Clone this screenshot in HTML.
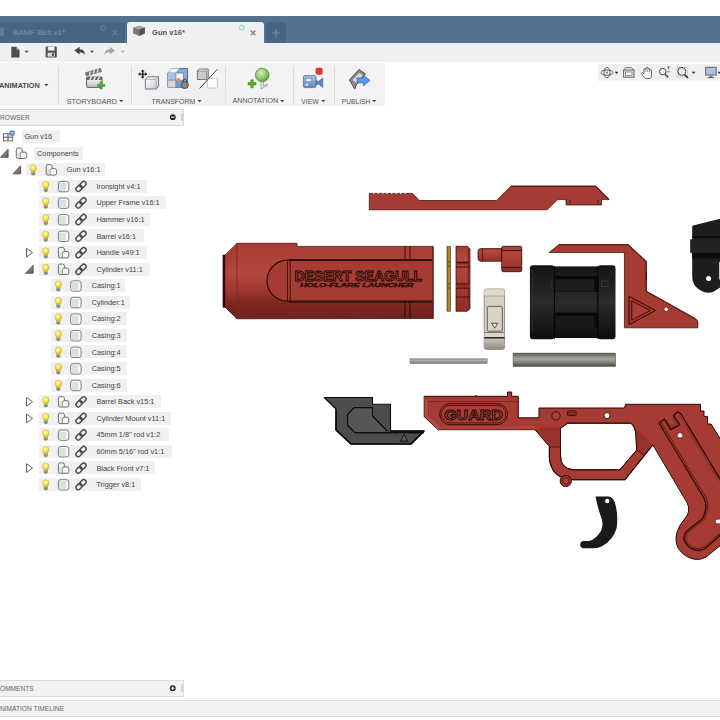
<!DOCTYPE html>
<html><head><meta charset="utf-8"><title>Gun v16</title>
<style>
html,body{margin:0;padding:0;background:#fff;}
body{width:720px;height:720px;position:relative;overflow:hidden;font-family:"Liberation Sans",sans-serif;color:#444;}
.abs{position:absolute;}
#hdr{left:0;top:16px;width:720px;height:27px;background:#53718f;}
#tab1{left:0;top:22px;width:125px;height:21px;background:#486684;border-radius:0 3px 0 0;}
#tab2{left:127px;top:22px;width:137px;height:21px;background:#f0f0f0;border-radius:3px 3px 0 0;}
#tab3{left:266px;top:22px;width:20px;height:21px;background:#486684;border-radius:3px 3px 0 0;}
#qat{left:0;top:43px;width:720px;height:19px;background:#f0f0f0;}
#ribbon{left:0;top:63px;width:385px;height:43px;background:#f3f3f3;}
.sep{position:absolute;top:66px;width:1px;height:38px;background:#dcdcdc;}
.rl{position:absolute;top:96px;font-size:7.3px;color:#555;white-space:nowrap;line-height:9px;}
.tabt{position:absolute;font-size:8px;line-height:10px;white-space:nowrap;}
#nav{left:598px;top:64px;width:122px;height:17px;background:#f0f0f0;}
.bar{position:absolute;background:#f2f2f2;border:1px solid #dcdcdc;box-sizing:border-box;font-size:6.6px;color:#666;white-space:nowrap;}
.row{position:absolute;height:13px;background:#f0f0f0;}
.rt{position:absolute;font-size:7.35px;line-height:13px;color:#444;white-space:nowrap;}
</style></head><body>
<div id="hdr" class="abs"></div>
<div id="tab1" class="abs"></div>
<div id="tab2" class="abs"></div>
<div id="tab3" class="abs"></div>
<div class="tabt" style="left:13px;top:28px;color:#7d93aa;">BAMF Belt v1*</div>
<div class="tabt" style="left:152px;top:28px;color:#555;font-weight:bold;font-size:7.6px;">Gun v16*</div>
<div id="qat" class="abs"></div>
<div id="ribbon" class="abs"></div>
<div id="nav" class="abs"></div>
<div class="sep" style="left:58.3px"></div>
<div class="sep" style="left:131.3px"></div>
<div class="sep" style="left:224.6px"></div>
<div class="sep" style="left:292.6px"></div>
<div class="sep" style="left:333.7px"></div>
<div class="abs" style="left:148px;top:87px;width:77px;height:17px;background:#e9eef3;opacity:.45"></div>
<div class="abs" style="left:224px;top:87px;width:44px;height:17px;background:#edf1f5;opacity:.35"></div>
<div class="rl" style="left:-1px;top:81.3px;font-weight:bold;color:#4a4a4a;">ANIMATION</div>
<div class="rl" style="left:66.8px;top:96.5px;font-size:7.2px">STORYBOARD</div>
<div class="rl" style="left:151.5px;top:96.5px;font-size:6.9px">TRANSFORM</div>
<div class="rl" style="left:232.6px;top:96.5px;font-size:7.1px">ANNOTATION</div>
<div class="rl" style="left:301.3px;top:96.5px;font-size:6.8px">VIEW</div>
<div class="rl" style="left:341.8px;top:96.5px;font-size:6.65px">PUBLISH</div>
<svg class="abs" style="left:0;top:0" width="720" height="130" viewBox="0 0 720 130">
<defs>
<linearGradient id="gcube" x1="0" y1="0" x2="1" y2="1"><stop offset="0" stop-color="#fff"/><stop offset="1" stop-color="#c9ccd2"/></linearGradient>
<radialGradient id="ggreen" cx=".4" cy=".35" r=".7"><stop offset="0" stop-color="#d9f0c0"/><stop offset=".6" stop-color="#8cc460"/><stop offset="1" stop-color="#5b9a36"/></radialGradient>
<linearGradient id="gblue" x1="0" y1="0" x2="0" y2="1"><stop offset="0" stop-color="#a9c4ec"/><stop offset="1" stop-color="#5f86c9"/></linearGradient>
<linearGradient id="gclap" x1="0" y1="0" x2="0" y2="1"><stop offset="0" stop-color="#fdfdfd"/><stop offset="1" stop-color="#b9bfc8"/></linearGradient>
</defs>
<path d="M119.20,99.90 h4.20 l-2.10,2.40z" fill="#444"/>
<path d="M197.50,99.90 h4.20 l-2.10,2.40z" fill="#444"/>
<path d="M280.20,99.90 h4.20 l-2.10,2.40z" fill="#444"/>
<path d="M321.20,99.90 h4.20 l-2.10,2.40z" fill="#444"/>
<path d="M372.20,99.90 h4.20 l-2.10,2.40z" fill="#444"/>
<path d="M44.30,83.90 h4.20 l-2.10,2.40z" fill="#444"/>
<path d="M0,28 l4,-1.5 v9 l-4,1.5z" fill="#5d7a97"/>
<circle cx="103.3" cy="27.6" r="2.4" fill="none" stroke="#3f9aa0" stroke-width="1"/>
<path d="M112.6,30.3 l4.8,4.8 m0,-4.8 l-4.8,4.8" stroke="#5f7c98" stroke-width="1.3" fill="none"/>
<circle cx="241.8" cy="27.6" r="2.4" fill="none" stroke="#7fd0c0" stroke-width="1"/>
<path d="M250.8,30.6 l4.6,4.6 m0,-4.6 l-4.6,4.6" stroke="#8a8a8a" stroke-width="1.5" fill="none"/>
<path d="M272,33 h8 m-4,-4 v8" stroke="#6f8ba6" stroke-width="1.2" fill="none"/>
<path d="M133.2,27.6 l6,-1.6 l5.6,1.4 v6 l-5.4,2.6 l-6.2,-2.4z" fill="#777"/><path d="M133.2,27.6 l6.2,1.8 l5.4,-2 l-5.6,-1.4z" fill="#a5a5a5"/><path d="M139.4,29.4 l5.4,-2 v6 l-5.4,2.6z" fill="#555"/>
<path d="M11.3,46.8 h5 l3.2,3.2 v7.4 h-8.2z" fill="#4d4d4d"/><path d="M16.3,46.8 v3.2 h3.2z" fill="#9a9a9a"/>
<path d="M24.71,50.81 h3.78 l-1.89,2.16z" fill="#444"/>
<rect x="45.6" y="46.6" width="11.2" height="10.8" rx="1.2" fill="#4d4d4d"/><rect x="47.8" y="46.6" width="6.8" height="4" fill="#f0f0f0"/><rect x="47.6" y="52.6" width="7.2" height="4" fill="#d8d8d8"/><rect x="52" y="53.2" width="1.8" height="2.8" fill="#4d4d4d"/>
<path d="M74.4,50.6 l5.2,-3.8 v2.4 q5.4,0 5.4,5.6 q-1.6,-2.8 -5.4,-2.6 v2.4z" fill="#454545"/>
<path d="M90.11,50.81 h3.78 l-1.89,2.16z" fill="#444"/>
<path d="M115,50.6 l-5.2,-3.8 v2.4 q-5.4,0 -5.4,5.6 q1.6,-2.8 5.4,-2.6 v2.4z" fill="#a8a8a8"/>
<path d="M120.91,50.81 h3.78 l-1.89,2.16z" fill="#aaa"/>
<g><rect x="86.6" y="77" width="15.4" height="10.4" rx=".8" fill="url(#gclap)" stroke="#555" stroke-width=".9"/><rect x="86.6" y="77" width="15.4" height="3" fill="#666"/><path d="M89,80 l1.6,-3 h1.6 l-1.6,3z M93,80 l1.6,-3 h1.6 l-1.6,3z M97,80 l1.6,-3 h1.6 l-1.6,3z" fill="#eee"/><g transform="rotate(-16 86.6 76)"><rect x="86.4" y="72.6" width="15.6" height="3.2" fill="#777" stroke="#555" stroke-width=".6"/><path d="M89,75.8 l1.6,-3.2 h1.6 l-1.6,3.2z M93,75.8 l1.6,-3.2 h1.6 l-1.6,3.2z M97,75.8 l1.6,-3.2 h1.6 l-1.6,3.2z" fill="#eee"/></g><path d="M97.6,84.4 h2.6 v-2.6 h2 v2.6 h2.6 v2 h-2.6 v2.6 h-2 v-2.6 h-2.6z" fill="#56b02c" stroke="#2f7a12" stroke-width=".5"/></g>
<g><path d="M142.7,69.4 l1.9,2.2 h-1.2 v1.8 h1.8 v-1.2 l2.2,1.9 l-2.2,1.9 v-1.2 h-1.8 v1.8 h1.2 l-1.9,2.2 l-1.9,-2.2 h1.2 v-1.8 h-1.8 v1.2 l-2.2,-1.9 l2.2,-1.9 v1.2 h1.8 v-1.8 h-1.2z" fill="#222"/><path d="M145.4,79.4 l2.4,-2.6 h10.8 v9.6 l-2.4,2.6 h-10.8z" fill="url(#gcube)" stroke="#666" stroke-width=".9" stroke-linejoin="round"/><path d="M145.4,79.4 h10.8 v9.6 m0,-9.6 l2.4,-2.6" fill="none" stroke="#888" stroke-width=".6"/></g>
<g><path d="M168,73 l4,-4.4 h15.6 v14.4 l-4,4.4 h-15.6z" fill="#86addf" stroke="#4a5f80" stroke-width=".9" stroke-linejoin="round"/><path d="M168,73 l4,-4.4 h7.8 l-4,4.4z" fill="#f1f4f8"/><rect x="168" y="73" width="15.6" height="14.4" fill="#f2f3f5" stroke="#4a5f80" stroke-width=".6"/><rect x="168" y="73" width="7.8" height="7.2" fill="#a9c3e8"/><rect x="168" y="80.2" width="7.8" height="7.2" fill="#d3d7dd"/><rect x="175.8" y="80.2" width="7.8" height="7.2" fill="#6f9bd8"/><path d="M168,80.2 h15.6 M175.8,73 v14.4 M179.8,68.6 l-4,4.4 M183.6,80.2 l4,-4.4" stroke="#5a6f90" stroke-width=".6" fill="none"/><circle cx="178.4" cy="79.8" r="1.9" fill="#f08a24"/><circle cx="184.8" cy="85" r="3.6" fill="#868686" stroke="#4a4a4a" stroke-width=".9"/><path d="M183,82.6 v-1.6 a1.8,1.8 0 0 1 3.6,0 v1.6" fill="none" stroke="#4a4a4a" stroke-width="1"/></g>
<g><path d="M197.4,71 l1.8,-2 h9 v8.4 l-1.8,2 h-9z" fill="url(#gcube)" stroke="#666" stroke-width=".9" stroke-linejoin="round"/><rect x="197.4" y="71" width="9" height="8.4" fill="#c6cad2" stroke="#666" stroke-width=".6"/><rect x="207.4" y="78.4" width="10" height="9.6" rx="1" fill="#fbfbfb" stroke="#999" stroke-width=".8" stroke-dasharray="1.6 1"/><path d="M199.6,88.4 L217.4,69.2" stroke="#444" stroke-width="1"/></g>
<g><path d="M261,80 h2.4 v6 l4,-2 v1.4 l-6.4,3.4z" fill="#eee" stroke="#777" stroke-width=".6"/><circle cx="262.2" cy="75" r="6.8" fill="url(#ggreen)" stroke="#4d8a2a" stroke-width=".8"/><path d="M248,82.6 h2.8 v-2.8 h2.4 v2.8 h2.8 v2.4 h-2.8 v2.8 h-2.4 v-2.8 h-2.8z" fill="#56b02c" stroke="#2f7a12" stroke-width=".5"/></g>
<g><rect x="303.4" y="75.6" width="12.6" height="12" rx="1.4" fill="url(#gblue)" stroke="#5a6f9a" stroke-width=".8"/><path d="M316,80.4 l2.4,1 l4.4,-3.4 v9.4 l-4.4,-3.4 l-2.4,1z" fill="#5f86c9" stroke="#4a5f90" stroke-width=".6"/><rect x="305.4" y="78.4" width="6.4" height="3.4" fill="#dfe8f6" stroke="#5a6f9a" stroke-width=".5"/><rect x="305.4" y="84" width="3" height="1.6" fill="#dfe8f6"/><rect x="315.6" y="67.8" width="7" height="7" rx="1.8" fill="#d93636"/></g>
<g><path d="M349.4,80 l9.6,-10.6 l6.4,4.4 l-9.2,11.2 l-1.4,4z" fill="#888" stroke="#444" stroke-width=".9" stroke-linejoin="round"/><path d="M352.6,80 l6.6,-7.2 l3.6,2.6 l-6.6,7.6z" fill="#d8d8d8"/><path d="M357,78 h6.4 v-3 l6.6,5.4 l-6.6,5.4 v-3 h-6.4z" fill="#5b98ea" stroke="#2c62b4" stroke-width=".7" stroke-linejoin="round"/></g>
<g fill="none" stroke="#555" stroke-width=".9"><ellipse cx="607" cy="72.6" rx="3" ry="5.2"/><ellipse cx="607" cy="72.6" rx="6" ry="2.6"/></g><circle cx="607" cy="72.6" r="1" fill="#3b7bd6"/>
<path d="M614.71,71.81 h3.78 l-1.89,2.16z" fill="#333"/>
<rect x="623.6" y="70" width="10.4" height="7.2" fill="#dde3ec" stroke="#555" stroke-width=".9"/><rect x="625.6" y="72" width="6.4" height="3.2" fill="#fff" stroke="#555" stroke-width=".6"/><path d="M624,70 l1.6,-2.4 h6 l2,2.4" fill="none" stroke="#555" stroke-width=".8"/>
<path d="M645.4,78.4 q-3,-2.8 -4,-5.4 q1.2,-1 2.6,.8 v-4.8 q1,-1 1.9,0 v-1.2 q1,-1 1.9,0 v1 q1,-.9 1.9,0 v1.2 q1,-.7 1.8,.2 v5.2 q0,2 -1.2,3z" fill="#fff" stroke="#444" stroke-width=".8" stroke-linejoin="round"/><path d="M645.9,69 v3 M647.8,68.8 v3.2 M649.7,69.6 v2.6" stroke="#444" stroke-width=".6"/>
<circle cx="662.8" cy="71.6" r="3.3" fill="#eef3f8" stroke="#444" stroke-width="1"/><path d="M665.2,74.2 l3,3.2" stroke="#444" stroke-width="1.6"/><path d="M668.6,66.4 v3.2 m-1.2,-2 l1.2,-1.4 l1.2,1.4 M667.2,71.8 h2.8" stroke="#444" stroke-width=".7" fill="none"/>
<rect x="677" y="67.4" width="10.6" height="9.6" fill="none" stroke="#888" stroke-width=".6" stroke-dasharray="1.2 1"/><circle cx="681.8" cy="71.4" r="4" fill="#e3eef4" stroke="#444" stroke-width="1"/><path d="M684.6,74.6 l3.4,3.4" stroke="#333" stroke-width="1.7"/>
<path d="M691.71,71.81 h3.78 l-1.89,2.16z" fill="#333"/>
<rect x="705.6" y="67.4" width="10.6" height="7.6" fill="#a9c2e6" stroke="#777" stroke-width="1.2"/><rect x="709.4" y="75.6" width="3" height="1.6" fill="#777"/><rect x="707.6" y="77" width="6.6" height="1.1" fill="#666"/>
<path d="M717.51,71.81 h3.78 l-1.89,2.16z" fill="#333"/>
</svg>
<div class="bar" style="left:-1px;top:108.5px;width:184.5px;height:17px;line-height:15.5px;">ROWSER</div>
<div class="row" style="left:21.7px;top:130.00px;width:38.3px"></div>
<div class="rt" style="left:24.4px;top:130.20px">Gun v16</div>
<div class="row" style="left:34px;top:146.57px;width:49.0px"></div>
<div class="rt" style="left:37px;top:146.77px">Components</div>
<div class="row" style="left:26.2px;top:163.14px;width:78.8px"></div>
<div class="rt" style="left:66.7px;top:163.34px">Gun v16:1</div>
<div class="row" style="left:39px;top:179.71px;width:108.0px"></div>
<div class="rt" style="left:96.4px;top:179.91px">Ironsight v4:1</div>
<div class="row" style="left:39px;top:196.28px;width:127.0px"></div>
<div class="rt" style="left:96.4px;top:196.48px">Upper Frame v16:1</div>
<div class="row" style="left:39px;top:212.85px;width:110.5px"></div>
<div class="rt" style="left:96.4px;top:213.05px">Hammer v16:1</div>
<div class="row" style="left:39px;top:229.42px;width:105.0px"></div>
<div class="rt" style="left:96.4px;top:229.62px">Barrel v16:1</div>
<div class="row" style="left:39px;top:245.99px;width:108.0px"></div>
<div class="rt" style="left:96.4px;top:246.19px">Handle v49:1</div>
<div class="row" style="left:39px;top:262.56px;width:110.5px"></div>
<div class="rt" style="left:96.4px;top:262.76px">Cylinder v11:1</div>
<div class="row" style="left:51.4px;top:279.13px;width:73.6px"></div>
<div class="rt" style="left:91.7px;top:279.33px">Casing:1</div>
<div class="row" style="left:51.4px;top:295.70px;width:78.6px"></div>
<div class="rt" style="left:91.7px;top:295.90px">Cylinder:1</div>
<div class="row" style="left:51.4px;top:312.27px;width:76.1px"></div>
<div class="rt" style="left:91.7px;top:312.47px">Casing:2</div>
<div class="row" style="left:51.4px;top:328.84px;width:76.1px"></div>
<div class="rt" style="left:91.7px;top:329.04px">Casing:3</div>
<div class="row" style="left:51.4px;top:345.41px;width:76.1px"></div>
<div class="rt" style="left:91.7px;top:345.61px">Casing:4</div>
<div class="row" style="left:51.4px;top:361.98px;width:76.1px"></div>
<div class="rt" style="left:91.7px;top:362.18px">Casing:5</div>
<div class="row" style="left:51.4px;top:378.55px;width:76.1px"></div>
<div class="rt" style="left:91.7px;top:378.75px">Casing:6</div>
<div class="row" style="left:39px;top:395.12px;width:122.0px"></div>
<div class="rt" style="left:96.4px;top:395.32px">Barrel Back v15:1</div>
<div class="row" style="left:39px;top:411.69px;width:132.0px"></div>
<div class="rt" style="left:96.4px;top:411.89px">Cylinder Mount v11:1</div>
<div class="row" style="left:39px;top:428.26px;width:129.5px"></div>
<div class="rt" style="left:96.4px;top:428.46px">45mm 1/8&quot; rod v1:2</div>
<div class="row" style="left:39px;top:444.83px;width:132.5px"></div>
<div class="rt" style="left:96.4px;top:445.03px">60mm 5/16&quot; rod v1:1</div>
<div class="row" style="left:39px;top:461.40px;width:116.0px"></div>
<div class="rt" style="left:96.4px;top:461.60px">Black Front v7:1</div>
<div class="row" style="left:39px;top:477.97px;width:102.0px"></div>
<div class="rt" style="left:96.4px;top:478.17px">Trigger v8:1</div>
<svg class="abs" style="left:0;top:0" width="200" height="500" viewBox="0 0 200 500"><defs><radialGradient id="gb" cx=".4" cy=".35" r=".7"><stop offset="0" stop-color="#fffbd0"/><stop offset=".5" stop-color="#f9e85a"/><stop offset="1" stop-color="#e9c320"/></radialGradient><linearGradient id="gt" x1="0" y1="0" x2="1" y2="1"><stop offset="0" stop-color="#bbb"/><stop offset="1" stop-color="#555"/></linearGradient></defs><g transform="translate(8.50,136.70)" fill="#f4f4f4" stroke="#666" stroke-width=".9"><rect x="-5" y="-3" width="4.6" height="3.6"/><rect x="-.4" y="-3" width="4.6" height="3.6"/><rect x="-5" y=".6" width="4.6" height="3.6"/><rect x="-.4" y=".6" width="4.6" height="3.6"/><rect x="1.6" y="-5.6" width="4" height="4" fill="#8fb4e6" stroke="#3b6fb5"/></g>
<path d="M8.10,149.27 v8 h-7.6z" fill="url(#gt)" stroke="#444" stroke-width=".8" stroke-linejoin="round"/>
<g transform="translate(21.30,153.27)"><path d="M-5,-3.4 q0,-1.8 1.8,-1.8 h2.4 q1.8,0 1.8,1.8 v2.2 h2.6 q1.8,0 1.8,1.8 v2.8 q0,1.8 -1.8,1.8 h-6.8 q-1.8,0 -1.8,-1.8z" fill="#f6f6f6" stroke="#6e6e6e" stroke-width="1"/><path d="M-1.2,5 v-4.4 q0,-1.6 2.2,-1.8" fill="none" stroke="#6e6e6e" stroke-width=".9"/><rect x="-4.2" y="-0.8" width="2.6" height="5" fill="#dedfe3"/></g>
<path d="M20.60,165.84 v8 h-7.6z" fill="url(#gt)" stroke="#444" stroke-width=".8" stroke-linejoin="round"/>
<g transform="translate(33.30,169.84)"><path d="M-1.6,2.2 h3.2 v2.6 q-1.6,1 -3.2,0z" fill="#8a8f9a" stroke="#666" stroke-width=".4"/><circle cx="0" cy="-1.7" r="3.25" fill="url(#gb)" stroke="#c4a52a" stroke-width=".5"/><path d="M-1.9,1.3 q1.9,1.2 3.8,0 l-.4,1.4 h-3z" fill="#f3d93a" stroke="#b89b1e" stroke-width=".4"/></g>
<g transform="translate(51.20,169.84)"><path d="M-5,-3.4 q0,-1.8 1.8,-1.8 h2.4 q1.8,0 1.8,1.8 v2.2 h2.6 q1.8,0 1.8,1.8 v2.8 q0,1.8 -1.8,1.8 h-6.8 q-1.8,0 -1.8,-1.8z" fill="#f6f6f6" stroke="#6e6e6e" stroke-width="1"/><path d="M-1.2,5 v-4.4 q0,-1.6 2.2,-1.8" fill="none" stroke="#6e6e6e" stroke-width=".9"/><rect x="-4.2" y="-0.8" width="2.6" height="5" fill="#dedfe3"/></g>
<g transform="translate(45.80,186.41)"><path d="M-1.6,2.2 h3.2 v2.6 q-1.6,1 -3.2,0z" fill="#8a8f9a" stroke="#666" stroke-width=".4"/><circle cx="0" cy="-1.7" r="3.25" fill="url(#gb)" stroke="#c4a52a" stroke-width=".5"/><path d="M-1.9,1.3 q1.9,1.2 3.8,0 l-.4,1.4 h-3z" fill="#f3d93a" stroke="#b89b1e" stroke-width=".4"/></g>
<g transform="translate(63.40,186.41)"><rect x="-5" y="-5" width="10.4" height="10.4" rx="2.4" fill="#fafafa" stroke="#787878" stroke-width=".95"/><rect x="-4.2" y="-2.8" width="7" height="7.4" rx="1.2" fill="#dedfe3"/><path d="M-4.2,-2.8 h7 l1.8,-1.6" fill="none" stroke="#c4c4c8" stroke-width=".5"/></g>
<g transform="translate(81.00,186.41) rotate(-45)" fill="none" stroke="#484848" stroke-width="1.4"><rect x="-6.2" y="-2.3" width="6.9" height="4.6" rx="2.3"/><rect x="-0.7" y="-2.3" width="6.9" height="4.6" rx="2.3"/></g>
<g transform="translate(45.80,202.98)"><path d="M-1.6,2.2 h3.2 v2.6 q-1.6,1 -3.2,0z" fill="#8a8f9a" stroke="#666" stroke-width=".4"/><circle cx="0" cy="-1.7" r="3.25" fill="url(#gb)" stroke="#c4a52a" stroke-width=".5"/><path d="M-1.9,1.3 q1.9,1.2 3.8,0 l-.4,1.4 h-3z" fill="#f3d93a" stroke="#b89b1e" stroke-width=".4"/></g>
<g transform="translate(63.40,202.98)"><rect x="-5" y="-5" width="10.4" height="10.4" rx="2.4" fill="#fafafa" stroke="#787878" stroke-width=".95"/><rect x="-4.2" y="-2.8" width="7" height="7.4" rx="1.2" fill="#dedfe3"/><path d="M-4.2,-2.8 h7 l1.8,-1.6" fill="none" stroke="#c4c4c8" stroke-width=".5"/></g>
<g transform="translate(81.00,202.98) rotate(-45)" fill="none" stroke="#484848" stroke-width="1.4"><rect x="-6.2" y="-2.3" width="6.9" height="4.6" rx="2.3"/><rect x="-0.7" y="-2.3" width="6.9" height="4.6" rx="2.3"/></g>
<g transform="translate(45.80,219.55)"><path d="M-1.6,2.2 h3.2 v2.6 q-1.6,1 -3.2,0z" fill="#8a8f9a" stroke="#666" stroke-width=".4"/><circle cx="0" cy="-1.7" r="3.25" fill="url(#gb)" stroke="#c4a52a" stroke-width=".5"/><path d="M-1.9,1.3 q1.9,1.2 3.8,0 l-.4,1.4 h-3z" fill="#f3d93a" stroke="#b89b1e" stroke-width=".4"/></g>
<g transform="translate(63.40,219.55)"><rect x="-5" y="-5" width="10.4" height="10.4" rx="2.4" fill="#fafafa" stroke="#787878" stroke-width=".95"/><rect x="-4.2" y="-2.8" width="7" height="7.4" rx="1.2" fill="#dedfe3"/><path d="M-4.2,-2.8 h7 l1.8,-1.6" fill="none" stroke="#c4c4c8" stroke-width=".5"/></g>
<g transform="translate(81.00,219.55) rotate(-45)" fill="none" stroke="#484848" stroke-width="1.4"><rect x="-6.2" y="-2.3" width="6.9" height="4.6" rx="2.3"/><rect x="-0.7" y="-2.3" width="6.9" height="4.6" rx="2.3"/></g>
<g transform="translate(45.80,236.12)"><path d="M-1.6,2.2 h3.2 v2.6 q-1.6,1 -3.2,0z" fill="#8a8f9a" stroke="#666" stroke-width=".4"/><circle cx="0" cy="-1.7" r="3.25" fill="url(#gb)" stroke="#c4a52a" stroke-width=".5"/><path d="M-1.9,1.3 q1.9,1.2 3.8,0 l-.4,1.4 h-3z" fill="#f3d93a" stroke="#b89b1e" stroke-width=".4"/></g>
<g transform="translate(63.40,236.12)"><rect x="-5" y="-5" width="10.4" height="10.4" rx="2.4" fill="#fafafa" stroke="#787878" stroke-width=".95"/><rect x="-4.2" y="-2.8" width="7" height="7.4" rx="1.2" fill="#dedfe3"/><path d="M-4.2,-2.8 h7 l1.8,-1.6" fill="none" stroke="#c4c4c8" stroke-width=".5"/></g>
<g transform="translate(81.00,236.12) rotate(-45)" fill="none" stroke="#484848" stroke-width="1.4"><rect x="-6.2" y="-2.3" width="6.9" height="4.6" rx="2.3"/><rect x="-0.7" y="-2.3" width="6.9" height="4.6" rx="2.3"/></g>
<path d="M26.50,248.29 v8.8 l6,-4.4z" fill="#fff" stroke="#666" stroke-width="1" stroke-linejoin="round"/>
<g transform="translate(45.80,252.69)"><path d="M-1.6,2.2 h3.2 v2.6 q-1.6,1 -3.2,0z" fill="#8a8f9a" stroke="#666" stroke-width=".4"/><circle cx="0" cy="-1.7" r="3.25" fill="url(#gb)" stroke="#c4a52a" stroke-width=".5"/><path d="M-1.9,1.3 q1.9,1.2 3.8,0 l-.4,1.4 h-3z" fill="#f3d93a" stroke="#b89b1e" stroke-width=".4"/></g>
<g transform="translate(63.40,252.69)"><path d="M-5,-3.4 q0,-1.8 1.8,-1.8 h2.4 q1.8,0 1.8,1.8 v2.2 h2.6 q1.8,0 1.8,1.8 v2.8 q0,1.8 -1.8,1.8 h-6.8 q-1.8,0 -1.8,-1.8z" fill="#f6f6f6" stroke="#6e6e6e" stroke-width="1"/><path d="M-1.2,5 v-4.4 q0,-1.6 2.2,-1.8" fill="none" stroke="#6e6e6e" stroke-width=".9"/><rect x="-4.2" y="-0.8" width="2.6" height="5" fill="#dedfe3"/></g>
<g transform="translate(81.00,252.69) rotate(-45)" fill="none" stroke="#484848" stroke-width="1.4"><rect x="-6.2" y="-2.3" width="6.9" height="4.6" rx="2.3"/><rect x="-0.7" y="-2.3" width="6.9" height="4.6" rx="2.3"/></g>
<path d="M33.10,265.26 v8 h-7.6z" fill="url(#gt)" stroke="#444" stroke-width=".8" stroke-linejoin="round"/>
<g transform="translate(45.80,269.26)"><path d="M-1.6,2.2 h3.2 v2.6 q-1.6,1 -3.2,0z" fill="#8a8f9a" stroke="#666" stroke-width=".4"/><circle cx="0" cy="-1.7" r="3.25" fill="url(#gb)" stroke="#c4a52a" stroke-width=".5"/><path d="M-1.9,1.3 q1.9,1.2 3.8,0 l-.4,1.4 h-3z" fill="#f3d93a" stroke="#b89b1e" stroke-width=".4"/></g>
<g transform="translate(63.40,269.26)"><path d="M-5,-3.4 q0,-1.8 1.8,-1.8 h2.4 q1.8,0 1.8,1.8 v2.2 h2.6 q1.8,0 1.8,1.8 v2.8 q0,1.8 -1.8,1.8 h-6.8 q-1.8,0 -1.8,-1.8z" fill="#f6f6f6" stroke="#6e6e6e" stroke-width="1"/><path d="M-1.2,5 v-4.4 q0,-1.6 2.2,-1.8" fill="none" stroke="#6e6e6e" stroke-width=".9"/><rect x="-4.2" y="-0.8" width="2.6" height="5" fill="#dedfe3"/></g>
<g transform="translate(81.00,269.26) rotate(-45)" fill="none" stroke="#484848" stroke-width="1.4"><rect x="-6.2" y="-2.3" width="6.9" height="4.6" rx="2.3"/><rect x="-0.7" y="-2.3" width="6.9" height="4.6" rx="2.3"/></g>
<g transform="translate(58.30,285.83)"><path d="M-1.6,2.2 h3.2 v2.6 q-1.6,1 -3.2,0z" fill="#8a8f9a" stroke="#666" stroke-width=".4"/><circle cx="0" cy="-1.7" r="3.25" fill="url(#gb)" stroke="#c4a52a" stroke-width=".5"/><path d="M-1.9,1.3 q1.9,1.2 3.8,0 l-.4,1.4 h-3z" fill="#f3d93a" stroke="#b89b1e" stroke-width=".4"/></g>
<g transform="translate(75.70,285.83)"><rect x="-5" y="-5" width="10.4" height="10.4" rx="2.4" fill="#fafafa" stroke="#787878" stroke-width=".95"/><rect x="-4.2" y="-2.8" width="7" height="7.4" rx="1.2" fill="#dedfe3"/><path d="M-4.2,-2.8 h7 l1.8,-1.6" fill="none" stroke="#c4c4c8" stroke-width=".5"/></g>
<g transform="translate(58.30,302.40)"><path d="M-1.6,2.2 h3.2 v2.6 q-1.6,1 -3.2,0z" fill="#8a8f9a" stroke="#666" stroke-width=".4"/><circle cx="0" cy="-1.7" r="3.25" fill="url(#gb)" stroke="#c4a52a" stroke-width=".5"/><path d="M-1.9,1.3 q1.9,1.2 3.8,0 l-.4,1.4 h-3z" fill="#f3d93a" stroke="#b89b1e" stroke-width=".4"/></g>
<g transform="translate(75.70,302.40)"><rect x="-5" y="-5" width="10.4" height="10.4" rx="2.4" fill="#fafafa" stroke="#787878" stroke-width=".95"/><rect x="-4.2" y="-2.8" width="7" height="7.4" rx="1.2" fill="#dedfe3"/><path d="M-4.2,-2.8 h7 l1.8,-1.6" fill="none" stroke="#c4c4c8" stroke-width=".5"/></g>
<g transform="translate(58.30,318.97)"><path d="M-1.6,2.2 h3.2 v2.6 q-1.6,1 -3.2,0z" fill="#8a8f9a" stroke="#666" stroke-width=".4"/><circle cx="0" cy="-1.7" r="3.25" fill="url(#gb)" stroke="#c4a52a" stroke-width=".5"/><path d="M-1.9,1.3 q1.9,1.2 3.8,0 l-.4,1.4 h-3z" fill="#f3d93a" stroke="#b89b1e" stroke-width=".4"/></g>
<g transform="translate(75.70,318.97)"><rect x="-5" y="-5" width="10.4" height="10.4" rx="2.4" fill="#fafafa" stroke="#787878" stroke-width=".95"/><rect x="-4.2" y="-2.8" width="7" height="7.4" rx="1.2" fill="#dedfe3"/><path d="M-4.2,-2.8 h7 l1.8,-1.6" fill="none" stroke="#c4c4c8" stroke-width=".5"/></g>
<g transform="translate(58.30,335.54)"><path d="M-1.6,2.2 h3.2 v2.6 q-1.6,1 -3.2,0z" fill="#8a8f9a" stroke="#666" stroke-width=".4"/><circle cx="0" cy="-1.7" r="3.25" fill="url(#gb)" stroke="#c4a52a" stroke-width=".5"/><path d="M-1.9,1.3 q1.9,1.2 3.8,0 l-.4,1.4 h-3z" fill="#f3d93a" stroke="#b89b1e" stroke-width=".4"/></g>
<g transform="translate(75.70,335.54)"><rect x="-5" y="-5" width="10.4" height="10.4" rx="2.4" fill="#fafafa" stroke="#787878" stroke-width=".95"/><rect x="-4.2" y="-2.8" width="7" height="7.4" rx="1.2" fill="#dedfe3"/><path d="M-4.2,-2.8 h7 l1.8,-1.6" fill="none" stroke="#c4c4c8" stroke-width=".5"/></g>
<g transform="translate(58.30,352.11)"><path d="M-1.6,2.2 h3.2 v2.6 q-1.6,1 -3.2,0z" fill="#8a8f9a" stroke="#666" stroke-width=".4"/><circle cx="0" cy="-1.7" r="3.25" fill="url(#gb)" stroke="#c4a52a" stroke-width=".5"/><path d="M-1.9,1.3 q1.9,1.2 3.8,0 l-.4,1.4 h-3z" fill="#f3d93a" stroke="#b89b1e" stroke-width=".4"/></g>
<g transform="translate(75.70,352.11)"><rect x="-5" y="-5" width="10.4" height="10.4" rx="2.4" fill="#fafafa" stroke="#787878" stroke-width=".95"/><rect x="-4.2" y="-2.8" width="7" height="7.4" rx="1.2" fill="#dedfe3"/><path d="M-4.2,-2.8 h7 l1.8,-1.6" fill="none" stroke="#c4c4c8" stroke-width=".5"/></g>
<g transform="translate(58.30,368.68)"><path d="M-1.6,2.2 h3.2 v2.6 q-1.6,1 -3.2,0z" fill="#8a8f9a" stroke="#666" stroke-width=".4"/><circle cx="0" cy="-1.7" r="3.25" fill="url(#gb)" stroke="#c4a52a" stroke-width=".5"/><path d="M-1.9,1.3 q1.9,1.2 3.8,0 l-.4,1.4 h-3z" fill="#f3d93a" stroke="#b89b1e" stroke-width=".4"/></g>
<g transform="translate(75.70,368.68)"><rect x="-5" y="-5" width="10.4" height="10.4" rx="2.4" fill="#fafafa" stroke="#787878" stroke-width=".95"/><rect x="-4.2" y="-2.8" width="7" height="7.4" rx="1.2" fill="#dedfe3"/><path d="M-4.2,-2.8 h7 l1.8,-1.6" fill="none" stroke="#c4c4c8" stroke-width=".5"/></g>
<g transform="translate(58.30,385.25)"><path d="M-1.6,2.2 h3.2 v2.6 q-1.6,1 -3.2,0z" fill="#8a8f9a" stroke="#666" stroke-width=".4"/><circle cx="0" cy="-1.7" r="3.25" fill="url(#gb)" stroke="#c4a52a" stroke-width=".5"/><path d="M-1.9,1.3 q1.9,1.2 3.8,0 l-.4,1.4 h-3z" fill="#f3d93a" stroke="#b89b1e" stroke-width=".4"/></g>
<g transform="translate(75.70,385.25)"><rect x="-5" y="-5" width="10.4" height="10.4" rx="2.4" fill="#fafafa" stroke="#787878" stroke-width=".95"/><rect x="-4.2" y="-2.8" width="7" height="7.4" rx="1.2" fill="#dedfe3"/><path d="M-4.2,-2.8 h7 l1.8,-1.6" fill="none" stroke="#c4c4c8" stroke-width=".5"/></g>
<path d="M26.50,397.42 v8.8 l6,-4.4z" fill="#fff" stroke="#666" stroke-width="1" stroke-linejoin="round"/>
<g transform="translate(45.80,401.82)"><path d="M-1.6,2.2 h3.2 v2.6 q-1.6,1 -3.2,0z" fill="#8a8f9a" stroke="#666" stroke-width=".4"/><circle cx="0" cy="-1.7" r="3.25" fill="url(#gb)" stroke="#c4a52a" stroke-width=".5"/><path d="M-1.9,1.3 q1.9,1.2 3.8,0 l-.4,1.4 h-3z" fill="#f3d93a" stroke="#b89b1e" stroke-width=".4"/></g>
<g transform="translate(63.40,401.82)"><path d="M-5,-3.4 q0,-1.8 1.8,-1.8 h2.4 q1.8,0 1.8,1.8 v2.2 h2.6 q1.8,0 1.8,1.8 v2.8 q0,1.8 -1.8,1.8 h-6.8 q-1.8,0 -1.8,-1.8z" fill="#f6f6f6" stroke="#6e6e6e" stroke-width="1"/><path d="M-1.2,5 v-4.4 q0,-1.6 2.2,-1.8" fill="none" stroke="#6e6e6e" stroke-width=".9"/><rect x="-4.2" y="-0.8" width="2.6" height="5" fill="#dedfe3"/></g>
<g transform="translate(81.00,401.82) rotate(-45)" fill="none" stroke="#484848" stroke-width="1.4"><rect x="-6.2" y="-2.3" width="6.9" height="4.6" rx="2.3"/><rect x="-0.7" y="-2.3" width="6.9" height="4.6" rx="2.3"/></g>
<path d="M26.50,413.99 v8.8 l6,-4.4z" fill="#fff" stroke="#666" stroke-width="1" stroke-linejoin="round"/>
<g transform="translate(45.80,418.39)"><path d="M-1.6,2.2 h3.2 v2.6 q-1.6,1 -3.2,0z" fill="#8a8f9a" stroke="#666" stroke-width=".4"/><circle cx="0" cy="-1.7" r="3.25" fill="url(#gb)" stroke="#c4a52a" stroke-width=".5"/><path d="M-1.9,1.3 q1.9,1.2 3.8,0 l-.4,1.4 h-3z" fill="#f3d93a" stroke="#b89b1e" stroke-width=".4"/></g>
<g transform="translate(63.40,418.39)"><path d="M-5,-3.4 q0,-1.8 1.8,-1.8 h2.4 q1.8,0 1.8,1.8 v2.2 h2.6 q1.8,0 1.8,1.8 v2.8 q0,1.8 -1.8,1.8 h-6.8 q-1.8,0 -1.8,-1.8z" fill="#f6f6f6" stroke="#6e6e6e" stroke-width="1"/><path d="M-1.2,5 v-4.4 q0,-1.6 2.2,-1.8" fill="none" stroke="#6e6e6e" stroke-width=".9"/><rect x="-4.2" y="-0.8" width="2.6" height="5" fill="#dedfe3"/></g>
<g transform="translate(81.00,418.39) rotate(-45)" fill="none" stroke="#484848" stroke-width="1.4"><rect x="-6.2" y="-2.3" width="6.9" height="4.6" rx="2.3"/><rect x="-0.7" y="-2.3" width="6.9" height="4.6" rx="2.3"/></g>
<g transform="translate(45.80,434.96)"><path d="M-1.6,2.2 h3.2 v2.6 q-1.6,1 -3.2,0z" fill="#8a8f9a" stroke="#666" stroke-width=".4"/><circle cx="0" cy="-1.7" r="3.25" fill="url(#gb)" stroke="#c4a52a" stroke-width=".5"/><path d="M-1.9,1.3 q1.9,1.2 3.8,0 l-.4,1.4 h-3z" fill="#f3d93a" stroke="#b89b1e" stroke-width=".4"/></g>
<g transform="translate(63.40,434.96)"><rect x="-5" y="-5" width="10.4" height="10.4" rx="2.4" fill="#fafafa" stroke="#787878" stroke-width=".95"/><rect x="-4.2" y="-2.8" width="7" height="7.4" rx="1.2" fill="#dedfe3"/><path d="M-4.2,-2.8 h7 l1.8,-1.6" fill="none" stroke="#c4c4c8" stroke-width=".5"/></g>
<g transform="translate(81.00,434.96) rotate(-45)" fill="none" stroke="#484848" stroke-width="1.4"><rect x="-6.2" y="-2.3" width="6.9" height="4.6" rx="2.3"/><rect x="-0.7" y="-2.3" width="6.9" height="4.6" rx="2.3"/></g>
<g transform="translate(45.80,451.53)"><path d="M-1.6,2.2 h3.2 v2.6 q-1.6,1 -3.2,0z" fill="#8a8f9a" stroke="#666" stroke-width=".4"/><circle cx="0" cy="-1.7" r="3.25" fill="url(#gb)" stroke="#c4a52a" stroke-width=".5"/><path d="M-1.9,1.3 q1.9,1.2 3.8,0 l-.4,1.4 h-3z" fill="#f3d93a" stroke="#b89b1e" stroke-width=".4"/></g>
<g transform="translate(63.40,451.53)"><rect x="-5" y="-5" width="10.4" height="10.4" rx="2.4" fill="#fafafa" stroke="#787878" stroke-width=".95"/><rect x="-4.2" y="-2.8" width="7" height="7.4" rx="1.2" fill="#dedfe3"/><path d="M-4.2,-2.8 h7 l1.8,-1.6" fill="none" stroke="#c4c4c8" stroke-width=".5"/></g>
<g transform="translate(81.00,451.53) rotate(-45)" fill="none" stroke="#484848" stroke-width="1.4"><rect x="-6.2" y="-2.3" width="6.9" height="4.6" rx="2.3"/><rect x="-0.7" y="-2.3" width="6.9" height="4.6" rx="2.3"/></g>
<path d="M26.50,463.70 v8.8 l6,-4.4z" fill="#fff" stroke="#666" stroke-width="1" stroke-linejoin="round"/>
<g transform="translate(45.80,468.10)"><path d="M-1.6,2.2 h3.2 v2.6 q-1.6,1 -3.2,0z" fill="#8a8f9a" stroke="#666" stroke-width=".4"/><circle cx="0" cy="-1.7" r="3.25" fill="url(#gb)" stroke="#c4a52a" stroke-width=".5"/><path d="M-1.9,1.3 q1.9,1.2 3.8,0 l-.4,1.4 h-3z" fill="#f3d93a" stroke="#b89b1e" stroke-width=".4"/></g>
<g transform="translate(63.40,468.10)"><path d="M-5,-3.4 q0,-1.8 1.8,-1.8 h2.4 q1.8,0 1.8,1.8 v2.2 h2.6 q1.8,0 1.8,1.8 v2.8 q0,1.8 -1.8,1.8 h-6.8 q-1.8,0 -1.8,-1.8z" fill="#f6f6f6" stroke="#6e6e6e" stroke-width="1"/><path d="M-1.2,5 v-4.4 q0,-1.6 2.2,-1.8" fill="none" stroke="#6e6e6e" stroke-width=".9"/><rect x="-4.2" y="-0.8" width="2.6" height="5" fill="#dedfe3"/></g>
<g transform="translate(81.00,468.10) rotate(-45)" fill="none" stroke="#484848" stroke-width="1.4"><rect x="-6.2" y="-2.3" width="6.9" height="4.6" rx="2.3"/><rect x="-0.7" y="-2.3" width="6.9" height="4.6" rx="2.3"/></g>
<g transform="translate(45.80,484.67)"><path d="M-1.6,2.2 h3.2 v2.6 q-1.6,1 -3.2,0z" fill="#8a8f9a" stroke="#666" stroke-width=".4"/><circle cx="0" cy="-1.7" r="3.25" fill="url(#gb)" stroke="#c4a52a" stroke-width=".5"/><path d="M-1.9,1.3 q1.9,1.2 3.8,0 l-.4,1.4 h-3z" fill="#f3d93a" stroke="#b89b1e" stroke-width=".4"/></g>
<g transform="translate(63.40,484.67)"><rect x="-5" y="-5" width="10.4" height="10.4" rx="2.4" fill="#fafafa" stroke="#787878" stroke-width=".95"/><rect x="-4.2" y="-2.8" width="7" height="7.4" rx="1.2" fill="#dedfe3"/><path d="M-4.2,-2.8 h7 l1.8,-1.6" fill="none" stroke="#c4c4c8" stroke-width=".5"/></g>
<g transform="translate(81.00,484.67) rotate(-45)" fill="none" stroke="#484848" stroke-width="1.4"><rect x="-6.2" y="-2.3" width="6.9" height="4.6" rx="2.3"/><rect x="-0.7" y="-2.3" width="6.9" height="4.6" rx="2.3"/></g></svg>
<svg class="abs" style="left:200px;top:150px" width="520" height="440" viewBox="200 150 520 440">
<defs>
<linearGradient id="gbar" x1="0" y1="0" x2="0" y2="1"><stop offset="0" stop-color="#a93e35"/><stop offset=".18" stop-color="#ae4238"/><stop offset=".42" stop-color="#b4473c"/><stop offset=".62" stop-color="#a0372f"/><stop offset=".77" stop-color="#82281f"/><stop offset="1" stop-color="#6b241e"/></linearGradient>
<linearGradient id="gtip" x1="0" y1="0" x2="0" y2="1"><stop offset="0" stop-color="#a2372f"/><stop offset=".4" stop-color="#b4463c"/><stop offset=".65" stop-color="#9c352d"/><stop offset=".8" stop-color="#7e261f"/><stop offset="1" stop-color="#65201b"/></linearGradient>
<linearGradient id="grod" x1="0" y1="0" x2="0" y2="1"><stop offset="0" stop-color="#5a5a56"/><stop offset=".4" stop-color="#a3a39b"/><stop offset=".6" stop-color="#96968e"/><stop offset="1" stop-color="#4a4a46"/></linearGradient>
<linearGradient id="grod2" x1="0" y1="0" x2="0" y2="1"><stop offset="0" stop-color="#8c8c88"/><stop offset=".4" stop-color="#b0b0aa"/><stop offset="1" stop-color="#6e6e6a"/></linearGradient>
<linearGradient id="gcyl" x1="0" y1="0" x2="0" y2="1"><stop offset="0" stop-color="#141414"/><stop offset=".3" stop-color="#222"/><stop offset=".5" stop-color="#2b2b2b"/><stop offset=".75" stop-color="#1c1c1c"/><stop offset="1" stop-color="#0e0e0e"/></linearGradient>
<linearGradient id="gbeige" x1="0" y1="0" x2="0" y2="1"><stop offset="0" stop-color="#c9c4b8"/><stop offset="1" stop-color="#8f8b82"/></linearGradient>
<linearGradient id="gdisc" x1="0" y1="0" x2="0" y2="1"><stop offset="0" stop-color="#a63b32"/><stop offset=".2" stop-color="#b4493f"/><stop offset=".6" stop-color="#a63b32"/><stop offset="1" stop-color="#8e2f28"/></linearGradient>
</defs>
<path d="M369.3,193.4 L412.5,193.4 L419.3,200.5 L496.5,200.5 L511,186.2 L595.7,186.2 L609,199.6 L601.5,199.6 L601.5,205 L566,205 L566,199.6 L557.8,199.6 L547,209.8 L369.3,209.8 Z" fill="#a53b32" stroke="#2a0907" stroke-width=".7" stroke-linejoin="round"/>
<path d="M511,186.4 L595.7,186.4 L609,199.6" fill="none" stroke="#5a1d18" stroke-width="1.3"/>
<path d="M373,193.2 h1.5 m3,0 h1.5 m3,0 h1.5 m3,0 h1.5 m3,0 h1.5 m3,0 h1.5 m3,0 h1.5 m3,0 h1.5" stroke="#fff" stroke-width="1"/>
<path d="M570,199.8 v5 M598,199.8 v5" stroke="#2a0907" stroke-width=".6"/>
<path d="M237,243.3 L297,243.3 L297,246.4 L433,246.4 L433,318.5 L237,318.8 L225.2,307.2 L223,307.2 L223,255 L225.2,255 Z" fill="url(#gbar)" stroke="#2a0907" stroke-width=".7" stroke-linejoin="round"/>
<path d="M237,243.3 L237,318.8 L225.2,307.2 L225.2,255 Z" fill="url(#gtip)"/>
<path d="M223,255 h2.2 v52.2 h-2.2z" fill="#2a0c0a"/>
<path d="M237,243.5 V318.6" stroke="#7a2721" stroke-width=".8"/>
<path d="M433,260.2 H287.5 A20.5,20.5 0 0 0 287.5,301.2 H433" fill="#a53c34" stroke="#2a0907" stroke-width="1.2"/><path d="M289,301.9 H433" stroke="#3a1411" stroke-width="2"/><path d="M289,260 H433" stroke="#240705" stroke-width="1.5"/>
<path d="M287.5,260.2 V301.2 M290.2,260.2 V301.2" stroke="#2a0907" stroke-width=".8"/>
<path d="M405,246.4 V260.2 M410,246.4 V260.2 M405,301.2 V318.5 M410,301.2 V318.5" stroke="#2a0907" stroke-width=".9"/>
<path d="M433,246.4 V318.5" stroke="#6b201b" stroke-width="1.4"/>
<text x="294.4" y="280.9" font-family="Liberation Sans, sans-serif" font-weight="bold" font-size="13.8" textLength="127.8" lengthAdjust="spacingAndGlyphs" fill="#ae4238" stroke="#220605" stroke-width=".95">DESERT SEAGULL</text>
<text x="300" y="286.9" font-family="Liberation Sans, sans-serif" font-weight="bold" font-style="italic" font-size="4.9" textLength="113.3" lengthAdjust="spacingAndGlyphs" fill="#2c0907" stroke="#2c0907" stroke-width=".3">HOLO-FLARE LAUNCHER</text>
<rect x="447" y="246.4" width="3.6" height="64.8" fill="#b08a30" stroke="#4a3a10" stroke-width=".6"/><path d="M447.6,246.6 V311" stroke="#6b5518" stroke-width=".8"/><path d="M447.4,262 h2.8 M447.4,266 h2.8 M447.4,284 h2.8 M447.4,288 h2.8" stroke="#4a3a10" stroke-width=".8"/>
<path d="M456,246.3 H467.4 L470,249 V308.6 L467.4,311.3 H456 Z" fill="url(#gdisc)" stroke="#2a0907" stroke-width=".7" stroke-linejoin="round"/>
<path d="M468.6,247.6 V310" stroke="#7c2822" stroke-width="1.6"/>
<rect x="456.3" y="262" width="13.4" height="2.4" fill="#7d2720"/><rect x="456.3" y="284" width="13.4" height="4.2" fill="#91302a"/>
<path d="M456.3,262.2 H469.7 M456.3,267 H469.7 M456.3,283.8 H469.7 M456.3,288.2 H469.7 M456.3,297 H469.7" stroke="#2a0907" stroke-width=".8"/>
<path d="M481,248.6 H502 V261.3 H481 Q478,261.3 478,258.3 V251.6 Q478,248.6 481,248.6Z" fill="url(#gdisc)" stroke="#2a0907" stroke-width=".7"/>
<path d="M482.6,248.8 V261.2" stroke="#2a0907" stroke-width=".7"/>
<rect x="501.7" y="246.3" width="20.1" height="25.4" rx="1.8" fill="url(#gdisc)" stroke="#2a0907" stroke-width=".8"/>
<path d="M502,250.6 H521.6 M502,267.7 H521.6" stroke="#2a0907" stroke-width=".9"/>
<rect x="484.2" y="289" width="20.4" height="60.4" rx="2.2" fill="#d5d0c5" stroke="#6e6a62" stroke-width=".7"/>
<path d="M486,289.3 h16.8 q1.6,.3 1.6,2 v4.6 h-20 v-4.6 q0,-1.7 1.6,-2z" fill="#dfdacd"/>
<rect x="484.5" y="338.4" width="19.8" height="10.8" rx="2" fill="url(#gbeige)"/>
<rect x="484.5" y="332.6" width="19.8" height="4.6" fill="#dcd6c6"/>
<path d="M484.4,296 H504.4" stroke="#9a958b" stroke-width=".6"/><path d="M484.4,332.5 H504.4" stroke="#55524c" stroke-width=".7"/><path d="M484.4,337.8 H504.4" stroke="#1e1d1b" stroke-width="1.5"/>
<rect x="487.3" y="306.4" width="15" height="24.8" rx=".8" fill="#d9d4c9" stroke="#4a4843" stroke-width=".8"/>
<path d="M491.6,323.2 H497.8 L494.7,328.2 Z" fill="#e8e4da" stroke="#2b2a27" stroke-width=".8" stroke-linejoin="round"/>
<rect x="410" y="358.8" width="77.2" height="4.7" fill="url(#grod2)" stroke="#6a6a66" stroke-width=".4"/>
<rect x="513.1" y="353.1" width="102.4" height="13.2" fill="url(#grod)" stroke="#3a3a38" stroke-width=".5"/>
<rect x="554" y="266.4" width="45" height="71.6" fill="url(#gcyl)"/>
<rect x="529.9" y="265.2" width="24.5" height="74.1" rx="3" fill="url(#gcyl)"/>
<rect x="597.6" y="265.2" width="17.9" height="74.1" rx="3" fill="url(#gcyl)"/>
<path d="M554.4,266 V339 M597.8,266 V339" stroke="#050505" stroke-width="1"/>
<rect x="555.6" y="276" width="43" height="16" fill="#080808"/><rect x="555.6" y="279.2" width="38.6" height="12.4" fill="#1d1d1d"/>
<rect x="555.6" y="312.6" width="43" height="15.6" fill="#080808"/><rect x="555.6" y="315.6" width="38.6" height="12.2" fill="#191919"/>
<rect x="601.5" y="281" width="6.6" height="5.4" fill="#202020" stroke="#444" stroke-width=".6"/>
<path d="M552,281 q-3,3.6 0,7.4 M612.6,296 q-2.4,4.4 0,8.6 M612.4,268.6 q-2.2,3 0,6" stroke="#3a3a3a" stroke-width=".7" fill="none"/>
<path d="M532.4,268.4 v5.4 M532.4,277.8 v11 M532.4,296 v15 M532.4,318 v14" stroke="#333" stroke-width=".7"/>
<path d="M549,252.6 L559,244.5 L628,244.5 L646.2,261.6 L646.2,291.2 L695.6,318.9 Q697.9,320 697.9,322 L697.9,327.8 L624.4,327.8 L624.4,252.6 Z" fill="#a53b32" stroke="#2a0907" stroke-width=".7" stroke-linejoin="round"/>
<path d="M559,244.6 L628,244.6 L646.2,261.6 V291.2 L695.6,318.9" fill="none" stroke="#5a1d18" stroke-width="1.2"/>
<path d="M629,296.3 V324.7 L655.5,310.5 Z" fill="#a53b32" stroke="#2a0907" stroke-width="1" stroke-linejoin="round"/><path d="M631.8,300.8 V320.2 L650.2,310.5 Z" fill="#a93e35" stroke="#2a0907" stroke-width=".9" stroke-linejoin="round"/>
<circle cx="666.2" cy="309.3" r="2.2" fill="#fff" stroke="#2a0907" stroke-width=".6"/>
<path d="M646.4,272 v8" stroke="#2a0907" stroke-width=".8"/>
<path d="M692.2,225.8 L720,218.8 V287.6 L714,291.6 Q707,294.4 700.6,290.6 Q692.2,285.6 692.2,277 V252.8 H690.4 V239.6 H692.2 Z" fill="#1d1d1d"/>
<rect x="690.4" y="239.6" width="29.6" height="13.2" fill="#232323"/><path d="M692.2,237 H720 M692.2,253.6 H720" stroke="#0a0a0a" stroke-width="1.4"/><rect x="692.2" y="253.4" width="27.8" height="5" fill="#0c0c0c"/>
<circle cx="708.6" cy="278.5" r="2.5" fill="#fff"/>
<rect x="718.6" y="261" width="5" height="19.6" rx="2" fill="#d0d0d0" stroke="#0a0a0a" stroke-width=".8"/>
<path d="M324.2,397.5 H372.5 V404.2 H390.5 V431 H424 L411,444 H351 L336,430 V409 Z" fill="#4c4c4c" stroke="#0c0c0c" stroke-width="1.1" stroke-linejoin="round"/>
<path d="M336,409 L336,430 L351,444 H411 L424,431 H390.5" fill="none" stroke="#0a0a0a" stroke-width="1.6" stroke-linejoin="round"/>
<path d="M354,407.6 H372.5 V416 L387.5,431.4 M354,407.6 L347.5,415 V425 L355,432.6 H424" fill="none" stroke="#0c0c0c" stroke-width="1.1" stroke-linejoin="round"/>
<path d="M347.5,415 V425 L355,432.6 H388.6 L372.5,416 V407.6 H354 Z" fill="#565656"/>
<path d="M354,407.6 H372.5 V416 L387.5,431.4 M354,407.6 L347.5,415 V425 L355,432.6 H424" fill="none" stroke="#0c0c0c" stroke-width="1.1" stroke-linejoin="round"/>
<path d="M400.4,441.2 L404.2,434.8 L408,441.2 Z" fill="#5a5a5a" stroke="#0c0c0c" stroke-width=".9" stroke-linejoin="round"/>
<path d="M390.5,431 L398,436 " stroke="#222" stroke-width=".6"/>
<path d="M424.2,396.3 L507.5,396.3 L507.5,392 L511.7,392 L511.7,396.3 L518.3,396.3 L518.3,417.8 L539,417.8 L539,408 L624.5,408 L625.5,404.3 L700.5,404.3 L700.5,411 L704,411 L704,416.4 L707.5,416.4 L707.5,424 L711,424 L721,440 L721,545 L706,557 Q700,560.4 694,559.2 Q684,557 678.4,548.6 Q674.6,541.6 676.8,533 Q678.6,526 684.6,519 Q691.6,511 687,502.6 L652.8,444.8 L625,479.7 L573,479.7 Q551.4,479 549.4,458 L549.4,446.7 L535,429.7 L438.3,429.7 L424.2,416.7 Z M567.5,423.2 L630.8,423.2 Q634.8,426 635.8,433.3 L636.7,450 L620,469.7 L573,469.7 Q560.5,468.4 560.5,456 L560.5,428.3 Z" fill="#a53b32" fill-rule="evenodd" stroke="#2a0907" stroke-width="1" stroke-linejoin="round"/>
<path d="M424.2,396.3 L428.3,401.6 V416 L440,425.6 H518 M428.3,401.6 H518.3" fill="none" stroke="#6b221d" stroke-width=".7"/>
<path d="M424.6,396.8 L428.3,401.6 V416 L440,425.6 L438.4,429.4 L424.6,416.6 Z" fill="#b64a40"/>
<path d="M440,425.6 H535 L535,429.4 H438.4 Z" fill="#b0443a"/>
<path d="M475,396.2 q1,-1.4 2,0" stroke="#2a0907" stroke-width=".8" fill="#a53b32"/>
<path d="M536,429.7 L549.4,446.7 H560.5 V427.6 L540,427.6 Z" fill="#98332b"/><path d="M549.4,447 H560.5" stroke="#2a0907" stroke-width=".7"/>
<path d="M635.8,432 L636.7,450 L644,455 L652.8,444.8 L638,430 Z" fill="#98332b"/><path d="M636.7,450 L644,455.4" stroke="#2a0907" stroke-width=".7"/>
<path d="M567.5,423.2 L630.8,423.2 Q634.8,426 635.8,433.3 L636.7,450 L620,469.7 L573,469.7 Q560.5,468.4 560.5,456 L560.5,428.3 Z" fill="none" stroke="#2a0907" stroke-width=".9"/>
<path d="M549.4,446.7 V458 Q551.4,479 573,479.7 H625 L652.8,444.8" fill="none" stroke="#2a0907" stroke-width="1.1"/>
<rect x="439.7" y="403.7" width="67.8" height="21" rx="10.5" fill="#a93e35" stroke="#2a0907" stroke-width=".9"/><rect x="441.5" y="405.5" width="64.2" height="17.4" rx="8.7" fill="none" stroke="#2a0907" stroke-width=".7"/>
<text x="444.2" y="420" font-family="Liberation Sans, sans-serif" font-weight="bold" font-size="15.1" textLength="58.6" lengthAdjust="spacingAndGlyphs" fill="#b1453b" stroke="#220605" stroke-width="1">GUARD</text>
<circle cx="556" cy="415.8" r="4.2" fill="#a93e35" stroke="#2a0907" stroke-width=".8"/>
<rect x="567.5" y="411" width="8.6" height="4.6" rx="1" fill="#a93e35" stroke="#2a0907" stroke-width=".8"/><rect x="569" y="412.3" width="5.6" height="2" fill="none" stroke="#2a0907" stroke-width=".5"/>
<circle cx="607" cy="415.6" r="3" fill="#fff" stroke="#2a0907" stroke-width=".9"/>
<circle cx="680" cy="435.4" r="2.7" fill="#fff" stroke="#2a0907" stroke-width=".6"/>
<rect x="715.4" y="519.2" width="8" height="4.6" rx="2" fill="#fff" stroke="#2a0907" stroke-width=".5"/>
<circle cx="565.8" cy="481" r="5.6" fill="#a53b32" stroke="#2a0907" stroke-width="1"/><circle cx="565.8" cy="481" r="3.3" fill="#ae4238" stroke="#2a0907" stroke-width=".7"/>
<path d="M659,422.8 L664.4,419.2 L670.7,429.6 L679.7,424.7 L673.5,415.7 L677.6,411.6 L681,414 L721,480.6" fill="none" stroke="#2a0907" stroke-width="1.3" stroke-linejoin="round"/>
<path d="M659,422.8 L704,498 Q708.4,506.6 702.6,518.6 L687,531 Q682.4,536 684.6,541 Q688,549 697.8,550.5 Q703,550.4 706,547.8 L721,534.6" fill="none" stroke="#2a0907" stroke-width="1.3" stroke-linejoin="round"/>
<path d="M660.6,421.4 L706,497.4 Q710.4,506.6 704.2,519.6 L688.4,532.2 Q684.4,536.6 686.2,540.6 Q689.4,547.4 697.8,548.6 Q702,548.6 705,546.2 L721,532.4" fill="none" stroke="#4a1410" stroke-width=".8" stroke-linejoin="round"/>
<path d="M666,420.4 L671.6,427.4 L677.2,424.2 L672.4,417" fill="none" stroke="#5c1a16" stroke-width=".6"/>
<path d="M679.4,415.4 L719,481" fill="none" stroke="#5c1a16" stroke-width=".6"/>
<path d="M664,431 L700,493" fill="none" stroke="#6b221d" stroke-width=".6"/>
<path d="M595.5,496.5 L608.9,496.5 Q613,497.5 614.6,502 Q618.6,514 616.7,527.8 Q613.6,540 602,546.2 Q598,548.2 594.3,548.2 L583,548.2 Q580,547.6 580.2,544.3 Q580.6,541 583.4,541 L589.4,541 Q596,539 601.1,530.7 Q604,524 601.1,517 Q597.4,507 595.5,496.5 Z" fill="#1a1a1a"/>
<circle cx="607.2" cy="501" r="2.2" fill="#fff"/>
</svg>
<div class="bar" style="left:-1px;top:680px;width:184.5px;height:16.5px;line-height:15px;">OMMENTS</div>
<div class="bar" style="left:-1px;top:700px;width:722px;height:17px;line-height:15.5px;">NIMATION TIMELINE</div>
<svg class="abs" style="left:0;top:108px" width="200" height="20" viewBox="0 108 200 20"><circle cx="172.8" cy="117.2" r="2.9" fill="#222"/><rect x="171" y="116.7" width="3.6" height="1" fill="#fff"/><rect x="181.4" y="113.4" width="1.2" height="7.6" fill="#bbb"/></svg><svg class="abs" style="left:0;top:676px" width="200" height="44" viewBox="0 676 200 44"><circle cx="172.8" cy="688.2" r="2.9" fill="#222"/><path d="M171,688.2 h3.6 M172.8,686.4 v3.6" stroke="#fff" stroke-width="1"/><rect x="181.4" y="684.4" width="1.2" height="7.6" fill="#bbb"/></svg>
</body></html>
